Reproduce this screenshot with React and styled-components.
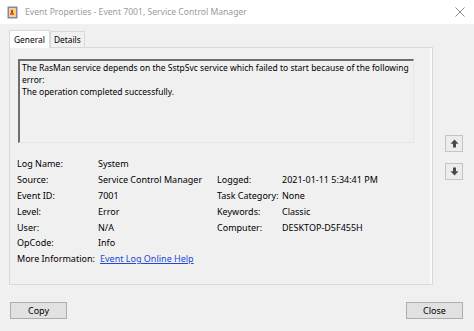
import styled, { createGlobalStyle } from "styled-components";

const Global = createGlobalStyle`
  html, body {
    margin: 0;
    padding: 0;
    background: #f0f0f0;
  }
  body {
    font-family: "Noto Sans", "Open Sans", sans-serif;
    font-size: 9px;
    color: #000;
  }
`;

const Window = styled.div`
  width: 474px;
  height: 331px;
  display: flex;
  flex-direction: column;
  background: #f0f0f0;
  box-sizing: border-box;
  overflow: hidden;
`;

const TitleBar = styled.div`
  height: 24px;
  flex: none;
  display: flex;
  align-items: center;
  background: #fff;
  padding: 0 7px;
`;

const Title = styled.div`
  flex: 1;
  margin-left: 7px;
  color: #9a9a9a;
  font-size: 8.6px;
  white-space: nowrap;
`;

const CloseX = styled.div`
  width: 12px;
  height: 12px;
  display: flex;
  align-items: center;
  justify-content: center;
  margin-right: 1px;
`;

const Body = styled.div`
  display: flex;
  padding: 5px 11px 0 9px;
  gap: 12px;
`;

const Main = styled.div`
  width: 424px;
  display: flex;
  flex-direction: column;
`;

const Tabs = styled.div`
  display: flex;
  align-items: flex-end;
  height: 18px;
  font-size: 8.4px;
`;

const Tab = styled.div`
  height: ${p => (p.active ? "18px" : "16px")};
  padding: 0 ${p => (p.active ? "4px" : "3px")};
  display: flex;
  align-items: center;
  background: ${p => (p.active ? "#fff" : "#f0f0f0")};
  border: 1px solid #d9d9d9;
  border-bottom: none;
  box-sizing: border-box;
  margin-bottom: ${p => (p.active ? "-1px" : "0")};
  position: relative;
  z-index: ${p => (p.active ? 1 : 0)};
`;

const Panel = styled.div`
  height: 238px;
  box-sizing: border-box;
  border: 1px solid #d9d9d9;
  background: #f0f0f0;
  padding: 11px 0 0 8px;
  box-shadow: inset -2px 0 0 #fafafa;
`;

const Description = styled.div`
  width: 396px;
  height: 84px;
  box-sizing: border-box;
  border-style: solid;
  border-width: 2px 1px 1px 2px;
  border-color: #6e6e6e #e6e6e6 #e6e6e6 #6e6e6e;
  background: #f0f0f0;
  padding: 1px 2px;
  font-size: 8.5px;
  line-height: 12px;
`;

const Fields = styled.div`
  display: grid;
  grid-template-columns: 81px 119px 65px 1fr;
  grid-auto-rows: 15.8px;
  align-items: center;
  margin-top: 13px;
  margin-left: -1px;
  white-space: nowrap;
`;

const Link = styled.a`
  color: #2447d6;
  text-decoration: underline;
  margin-left: 2px;
  cursor: pointer;
`;

const Side = styled.div`
  display: flex;
  flex-direction: column;
  gap: 11px;
  padding-top: 106px;
`;

const ArrowButton = styled.div`
  width: 18px;
  height: 17px;
  box-sizing: border-box;
  border: 1px solid #c4c4c4;
  background: #ececec;
  display: flex;
  align-items: center;
  justify-content: center;
`;

const Footer = styled.div`
  display: flex;
  justify-content: space-between;
  padding: 17px 11px 0 10px;
`;

const Button = styled.div`
  width: 57px;
  height: 17px;
  box-sizing: border-box;
  border: 1px solid #adadad;
  background: #e1e1e1;
  display: flex;
  align-items: center;
  justify-content: center;
`;

const Arrow = ({ down }) => (
  <svg width="9" height="9" viewBox="0 0 9 9" style={{ transform: down ? "rotate(180deg)" : "none" }}>
    <path d="M4.5 0.5 L8.5 4.8 L6 4.8 L6 8.5 L3 8.5 L3 4.8 L0.5 4.8 Z" fill="#4a4a4a" />
  </svg>
);

const EventIcon = () => (
  <svg width="11" height="13" viewBox="0 0 11 13">
    <rect x="0.5" y="0.5" width="10" height="12" fill="#7f86b8" />
    <rect x="2" y="2" width="7" height="9" fill="#f4d27a" />
    <rect x="4" y="4" width="2" height="5" fill="#c4382c" />
    <rect x="3" y="7" width="4" height="2" fill="#e0603a" />
  </svg>
);

const fields = [
  ["Log Name:", "System", "", ""],
  ["Source:", "Service Control Manager", "Logged:", "2021-01-11 5:34:41 PM"],
  ["Event ID:", "7001", "Task Category:", "None"],
  ["Level:", "Error", "Keywords:", "Classic"],
  ["User:", "N/A", "Computer:", "DESKTOP-D5F455H"],
  ["OpCode:", "Info", "", ""],
];

export default function App() {
  return (
    <Window>
      <Global />
      <TitleBar>
        <EventIcon />
        <Title>Event Properties - Event 7001, Service Control Manager</Title>
        <CloseX>
          <svg width="10" height="10" viewBox="0 0 10 10">
            <path d="M0.5 0.5 L9.5 9.5 M9.5 0.5 L0.5 9.5" stroke="#8a8a8a" strokeWidth="1" />
          </svg>
        </CloseX>
      </TitleBar>
      <Body>
        <Main>
          <Tabs>
            <Tab active>General</Tab>
            <Tab>Details</Tab>
          </Tabs>
          <Panel>
            <Description>
              The RasMan service depends on the SstpSvc service which failed to start because of the following error:
              <br />
              The operation completed successfully.
            </Description>
            <Fields>
              {fields.map(row => row.map((cell, i) => <span key={row[0] + i}>{cell}</span>))}
              <span>More Information:</span>
              <span>
                <Link>Event Log Online Help</Link>
              </span>
            </Fields>
          </Panel>
        </Main>
        <Side>
          <ArrowButton>
            <Arrow />
          </ArrowButton>
          <ArrowButton>
            <Arrow down />
          </ArrowButton>
        </Side>
      </Body>
      <Footer>
        <Button>Copy</Button>
        <Button>Close</Button>
      </Footer>
    </Window>
  );
}
